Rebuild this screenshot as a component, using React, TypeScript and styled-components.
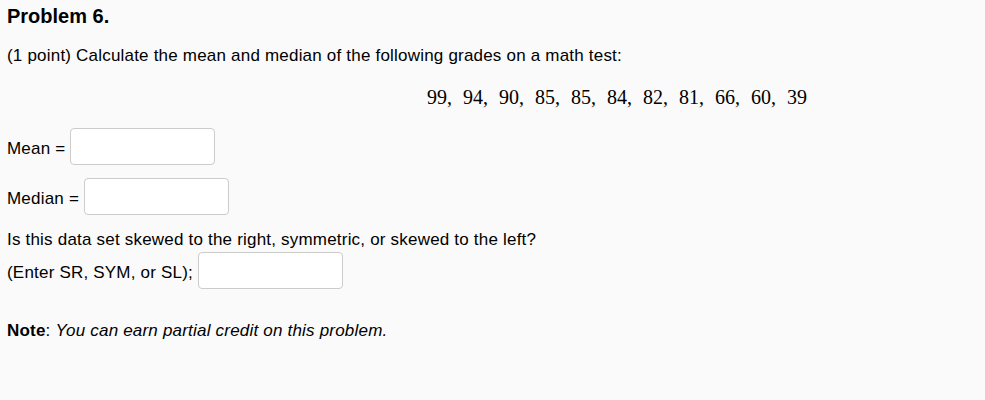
import React from "react";
import styled, { createGlobalStyle } from "styled-components";

const Global = createGlobalStyle`
  html, body { margin: 0; padding: 0; background: #fafafa; }
  body { font-family: "Liberation Sans", Arial, sans-serif; color: #000; }
`;

const Page = styled.div`
  padding: 4px 7px 0 7px;
  display: flex;
  flex-direction: column;
`;

const Title = styled.h3`
  margin: 0;
  font-size: 20px;
  font-weight: bold;
  line-height: 24px;
`;

const Para = styled.p<{ $top?: number }>`
  margin: ${(p) => p.$top ?? 0}px 0 0 0;
  font-size: 17px;
  letter-spacing: 0.2px;
  line-height: 20px;
`;

const MathLine = styled.div`
  margin-top: 19px;
  padding-left: 420px;
  font-family: "Liberation Serif", "Times New Roman", serif;
  font-size: 20px;
  line-height: 24px;
  word-spacing: 6px;
`;

const Row = styled.div<{ $top: number }>`
  display: flex;
  align-items: center;
  gap: 5px;
  margin-top: ${(p) => p.$top}px;
  font-size: 17px;
  letter-spacing: 0.2px;
`;

const Label = styled.span`
  padding-top: 5px;
`;

const Answer = styled.input`
  width: 145px;
  height: 37px;
  box-sizing: border-box;
  border: 1px solid #ccc;
  border-radius: 4px;
  background: #fff;
  padding: 4px 6px;
  font-size: 16px;
  font-family: inherit;
`;

const Note = styled.p`
  margin: 32px 0 0 0;
  font-size: 17px;
  letter-spacing: 0.2px;
  line-height: 20px;
  b { font-weight: bold; }
  i { font-style: italic; }
`;

export default function App() {
  return (
    <>
      <Global />
      <Page>
        <Title>Problem 6.</Title>
        <Para $top={18}>
          (1 point) Calculate the mean and median of the following grades on a math test:
        </Para>
        <MathLine>99, 94, 90, 85, 85, 84, 82, 81, 66, 60, 39</MathLine>
        <Row $top={19}>
          <Label>Mean =</Label>
          <Answer type="text" />
        </Row>
        <Row $top={13}>
          <Label>Median =</Label>
          <Answer type="text" />
        </Row>
        <Para $top={15}>
          Is this data set skewed to the right, symmetric, or skewed to the left?
        </Para>
        <Row $top={2}>
          <Label>(Enter SR, SYM, or SL);</Label>
          <Answer type="text" />
        </Row>
        <Note>
          <b>Note</b>: <i>You can earn partial credit on this problem.</i>
        </Note>
      </Page>
    </>
  );
}
